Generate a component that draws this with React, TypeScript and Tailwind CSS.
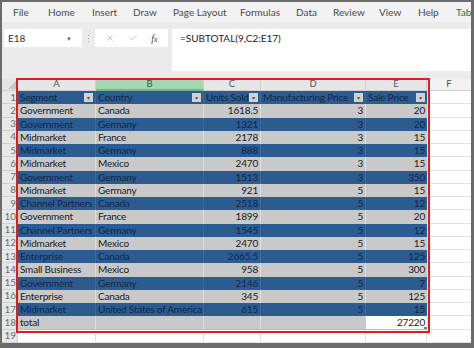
import { Check, X } from 'lucide-react';

type Row = [string, string, string, string, string];

const rows: Row[] = [
  ['Government', 'Canada', '1618.5', '3', '20'],
  ['Government', 'Germany', '1321', '3', '20'],
  ['Midmarket', 'France', '2178', '3', '15'],
  ['Midmarket', 'Germany', '888', '3', '15'],
  ['Midmarket', 'Mexico', '2470', '3', '15'],
  ['Government', 'Germany', '1513', '3', '350'],
  ['Midmarket', 'Germany', '921', '5', '15'],
  ['Channel Partners', 'Canada', '2518', '5', '12'],
  ['Government', 'France', '1899', '5', '20'],
  ['Channel Partners', 'Germany', '1545', '5', '12'],
  ['Midmarket', 'Mexico', '2470', '5', '15'],
  ['Enterprise', 'Canada', '2665.5', '5', '125'],
  ['Small Business', 'Mexico', '958', '5', '300'],
  ['Government', 'Germany', '2146', '5', '7'],
  ['Enterprise', 'Canada', '345', '5', '125'],
  ['Midmarket', 'United States of America', '615', '5', '15'],
];

const menu = [
  { label: 'File', w: 'w-[35px]' },
  { label: 'Home', w: 'w-[44px]' },
  { label: 'Insert', w: 'w-[41px]' },
  { label: 'Draw', w: 'w-[40px]' },
  { label: 'Page Layout', w: 'w-[67px]' },
  { label: 'Formulas', w: 'w-[56px]' },
  { label: 'Data', w: 'w-[37px]' },
  { label: 'Review', w: 'w-[46px]' },
  { label: 'View', w: 'w-[39px]' },
  { label: 'Help', w: 'w-[38px]' },
];

function FilterButton() {
  return (
    <span className="ml-auto flex h-[9px] w-[9px] shrink-0 items-center justify-center bg-[#d2d2d2] text-[6px] leading-none text-[#555]">
      ▾
    </span>
  );
}

function RowHead({ n }: { n: number }) {
  return (
    <div className="flex w-[16px] shrink-0 items-center justify-end border-r border-b border-[#d0d0d0] bg-[#e8e8e8] pr-[1px] text-[10px] tracking-normal text-[#6a6a6a]">
      {n}
    </div>
  );
}

function Cell({ children, className = '' }: { children?: React.ReactNode; className?: string }) {
  return <div className={`flex items-center overflow-hidden whitespace-nowrap px-[2px] ${className}`}>{children}</div>;
}

export default function App() {
  return (
    <div className="relative flex h-[348px] w-[474px] flex-col overflow-hidden border-t-2 border-r-[3px] border-l-2 border-[#6b6b6b] bg-white font-['Lato',sans-serif]">
      {/* ribbon tabs */}
      <div className="flex h-[20px] shrink-0 items-center overflow-hidden whitespace-nowrap bg-[#f2f2f2] pl-[11px] text-[10px] text-[#4a4a4a] shadow-[0_1px_1px_rgba(0,0,0,0.12)]">
        {menu.map((m) => (
          <span key={m.label} className={`${m.w} shrink-0`}>
            {m.label}
          </span>
        ))}
        <span className="text-[#217346]">Tabl</span>
      </div>

      {/* formula bar */}
      <div className="flex h-[57px] shrink-0 items-start bg-[#ebebeb] pt-[7px]">
        <div className="ml-[2px] flex h-[18px] w-[78px] items-center justify-between bg-white pr-[10px] pl-[4px] text-[10px] text-[#333]">
          <span>E18</span>
          <span className="text-[6px] text-[#666]">▼</span>
        </div>
        <div className="flex h-[18px] w-[13px] flex-col items-center justify-center gap-[2px]">
          <span className="h-[1px] w-[1px] bg-[#999]" />
          <span className="h-[1px] w-[1px] bg-[#999]" />
          <span className="h-[1px] w-[1px] bg-[#999]" />
        </div>
        <div className="flex h-[18px] w-[73px] items-center justify-around bg-white px-[4px] text-[#9a9a9a]">
          <X size={10} strokeWidth={1.3} />
          <Check size={10} strokeWidth={1.3} />
          <span className="font-['Liberation_Serif',serif] text-[10px] italic text-[#444]">
            f<span className="text-[8px]">x</span>
          </span>
        </div>
        <div className="ml-[4px] flex h-[42px] flex-1 items-start bg-white pt-[2px] pl-[8px] text-[10px] text-[#222]">
          =SUBTOTAL(9,C2:E17)
        </div>
      </div>

      {/* column headers */}
      <div className="flex h-[12px] shrink-0 text-[9.5px] text-[#555]">
        <div className="relative w-[16px] shrink-0 border-r border-b border-[#cfcfcf] bg-[#e4e4e4]">
          <svg className="absolute right-[1px] bottom-[1px]" width="8" height="8" viewBox="0 0 8 8">
            <polygon points="8,0 8,8 0,8" fill="#c4c4c4" />
          </svg>
        </div>
        <div className="flex w-[78px] shrink-0 items-center justify-center border-r border-b border-[#cfcfcf] bg-[#e6e6e6]">A</div>
        <div className="flex w-[108px] shrink-0 items-center justify-center border-r border-b-2 border-[#cfcfcf] border-b-[#6fb98a] bg-[#a3d7b3] text-[#2f5a3e]">
          B
        </div>
        <div className="flex w-[57px] shrink-0 items-center justify-center border-r border-b border-[#cfcfcf] bg-[#e6e6e6]">C</div>
        <div className="flex w-[105px] shrink-0 items-center justify-center border-r border-b border-[#cfcfcf] bg-[#e6e6e6]">D</div>
        <div className="flex w-[61px] shrink-0 items-center justify-center border-r border-b border-[#cfcfcf] bg-[#e6e6e6]">E</div>
        <div className="flex flex-1 items-center justify-center border-b border-[#cfcfcf] bg-[#f3f3f3]">F</div>
      </div>

      {/* table header row */}
      <div className="flex h-[13.25px] shrink-0 text-[10px] tracking-[-0.2px] text-[#10284a]">
        <RowHead n={1} />
        <Cell className="w-[78px] shrink-0 border-r border-[#3d6a9c] bg-[#2c5b8f]">
          Segment
          <FilterButton />
        </Cell>
        <Cell className="w-[108px] shrink-0 border-r border-[#3d6a9c] bg-[#2c5b8f]">
          Country
          <FilterButton />
        </Cell>
        <Cell className="w-[57px] shrink-0 border-r border-[#3d6a9c] bg-[#2c5b8f]">
          Units Sold
          <FilterButton />
        </Cell>
        <Cell className="w-[105px] shrink-0 border-r border-[#3d6a9c] bg-[#2c5b8f]">
          Manufacturing Price
          <FilterButton />
        </Cell>
        <Cell className="w-[61px] shrink-0 bg-[#2c5b8f]">
          Sale Price
          <FilterButton />
        </Cell>
        <Cell className="flex-1 border-b border-l border-[#e1e1e1]" />
      </div>

      {/* data rows */}
      {rows.map((r, i) => {
        const blue = i % 2 === 1;
        const bg = blue ? 'bg-[#2c5b8f] text-[#10284a] border-[#3d6a9c]' : 'bg-[#c9c9c9] text-[#1a1a1a] border-[#dedede]';
        return (
          <div key={i} className="flex h-[13.25px] shrink-0 text-[10px] tracking-[-0.2px]">
            <RowHead n={i + 2} />
            <Cell className={`w-[78px] shrink-0 border-r ${bg}`}>{r[0]}</Cell>
            <Cell className={`w-[108px] shrink-0 border-r ${bg}`}>{r[1]}</Cell>
            <Cell className={`w-[57px] shrink-0 justify-end border-r ${bg}`}>{r[2]}</Cell>
            <Cell className={`w-[105px] shrink-0 justify-end border-r ${bg}`}>{r[3]}</Cell>
            <Cell className={`w-[61px] shrink-0 justify-end ${bg}`}>{r[4]}</Cell>
            <Cell className="flex-1 border-b border-l border-[#e1e1e1]" />
          </div>
        );
      })}

      {/* total row */}
      <div className="flex h-[13.25px] shrink-0 text-[10px] tracking-[-0.2px] text-[#1a1a1a]">
        <RowHead n={18} />
        <Cell className="w-[78px] shrink-0 border-r border-b border-[#dedede] border-b-[#9fd0ad] bg-[#c9c9c9]">total</Cell>
        <Cell className="w-[108px] shrink-0 border-r border-b border-[#dedede] border-b-[#9fd0ad] bg-[#c9c9c9]" />
        <Cell className="w-[57px] shrink-0 border-r border-b border-[#dedede] border-b-[#9fd0ad] bg-[#c9c9c9]" />
        <Cell className="w-[105px] shrink-0 border-b border-[#9fd0ad] bg-[#c9c9c9]" />
        <Cell className="relative w-[61px] shrink-0 justify-end border-b border-[#9fd0ad] bg-white">
          27220
          <span className="absolute right-0 bottom-[-1px] h-[3px] w-[3px] bg-[#4a9a6a]" />
        </Cell>
        <Cell className="flex-1 border-b border-l border-[#e1e1e1]" />
      </div>

      {/* empty row 19 */}
      <div className="flex h-[13.25px] shrink-0 text-[10px]">
        <RowHead n={19} />
        <div className="w-[78px] shrink-0 border-r border-b border-[#e1e1e1]" />
        <div className="w-[108px] shrink-0 border-r border-b border-[#e1e1e1]" />
        <div className="w-[57px] shrink-0 border-r border-b border-[#e1e1e1]" />
        <div className="w-[105px] shrink-0 border-r border-b border-[#e1e1e1]" />
        <div className="w-[61px] shrink-0 border-r border-b border-[#e1e1e1]" />
        <div className="flex-1 border-b border-[#e1e1e1]" />
      </div>

      <div className="flex-1 bg-[#6b6b6b]" />

      {/* red highlight box over the table */}
      <div className="pointer-events-none absolute top-[76px] left-[14px] h-[255px] w-[414px] border-2 border-[#e31b1b]" />
    </div>
  );
}
